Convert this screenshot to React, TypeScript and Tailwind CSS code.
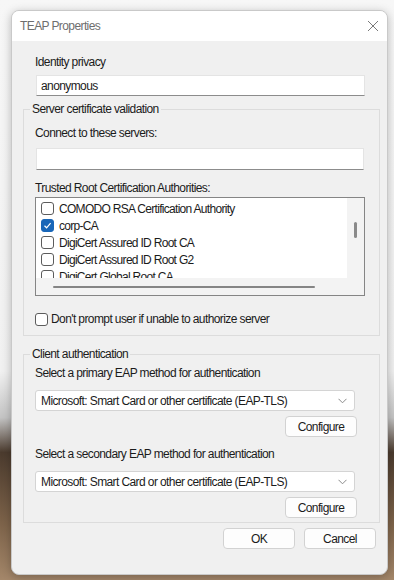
import React from "react";

const font = { fontFamily: '"Liberation Sans", Arial, sans-serif' };

const Check = ({ checked = false }: { checked?: boolean }) => (
  <span
    className={
      "flex h-[13px] w-[13px] shrink-0 items-center justify-center rounded-[3px] border " +
      (checked ? "border-[#1866b8] bg-[#1866b8]" : "border-[#5c5c5c] bg-white")
    }
  >
    {checked && (
      <svg width="9" height="9" viewBox="0 0 9 9" fill="none">
        <polyline points="1.5,4.8 3.6,6.8 7.6,2.2" stroke="white" strokeWidth="1.2" />
      </svg>
    )}
  </span>
);

const Btn = ({ label }: { label: string }) => (
  <button className="h-[21px] w-[72px] rounded-[4px] border border-[#d2d2d2] bg-[#fdfdfd] text-[12px] leading-[16px] text-[#1b1b1b]">
    {label}
  </button>
);

const Select = () => (
  <div className="mt-[9px] flex h-[21px] w-[320px] items-center justify-between rounded-[3px] border border-[#d4d4d4] bg-white pl-[5px] pr-[7px]">
    <span>Microsoft: Smart Card or other certificate (EAP-TLS)</span>
    <svg width="9" height="6" viewBox="0 0 9 6" fill="none">
      <polyline points="0.5,0.8 4.5,4.8 8.5,0.8" stroke="#8a8a8a" strokeWidth="1" />
    </svg>
  </div>
);

const certs = [
  { name: "COMODO RSA Certification Authority", checked: false },
  { name: "corp-CA", checked: true },
  { name: "DigiCert Assured ID Root CA", checked: false },
  { name: "DigiCert Assured ID Root G2", checked: false },
  { name: "DigiCert Global Root CA", checked: false },
];

export default function App() {
  return (
    <div
      className="h-[580px] w-[394px] overflow-hidden bg-[linear-gradient(to_bottom,#f7f7f7_0%,#f1f1f1_64%,#c4c4c4_72%,#4b3b2e_78%,#7c6249_90%,#a4876a_100%)] pl-[11px] pt-[10px] text-[12px] leading-[16px] tracking-[-0.6px] text-[#1b1b1b]"
      style={font}
    >
      <div className="flex h-[565px] w-[377px] flex-col overflow-hidden rounded-[8px] border border-[#c9c9c9] bg-[#f0f0f0] shadow-[0_2px_10px_rgba(0,0,0,0.25)]">
        {/* title bar */}
        <div className="flex h-[30px] shrink-0 items-center justify-between bg-white pl-[8px] pr-[8px]">
          <span className="text-[12px] text-[#6e6e6e]">TEAP Properties</span>
          <svg width="12" height="12" viewBox="0 0 12 12" fill="none">
            <line x1="1" y1="1" x2="11" y2="11" stroke="#7a7a7a" strokeWidth="1" />
            <line x1="11" y1="1" x2="1" y2="11" stroke="#7a7a7a" strokeWidth="1" />
          </svg>
        </div>

        <div className="flex flex-col pl-[11px] pt-[13px]">
          <div className="pl-[12px]">Identity privacy</div>
          <div className="ml-[13px] mt-[5px] flex h-[21px] w-[329px] items-center border border-[#e4e4e4] border-b-[#8c8c8c] bg-white pl-[4px]">
            anonymous
          </div>

          {/* server certificate validation */}
          <fieldset className="mt-[5px] w-[357px] border border-[#dcdcdc] px-0 pb-[8px]">
            <legend className="ml-[6px] px-[2px]">Server certificate validation</legend>
            <div className="flex flex-col pl-[11px] pt-[8px]">
              <div>Connect to these servers:</div>
              <div className="ml-[1px] mt-[7px] h-[22px] w-[328px] border border-[#e4e4e4] border-b-[#8c8c8c] bg-white" />
              <div className="mt-[10px]">Trusted Root Certification Authorities:</div>
              <div className="mt-[1px] flex h-[99px] w-[330px] flex-col border border-[#858585] bg-[#f3f3f3]">
                <div className="flex h-[80px]">
                  <div className="flex w-[311px] flex-col overflow-hidden bg-white pl-[5px] pt-[2px] tracking-[-0.7px]">
                    {certs.map((c) => (
                      <div key={c.name} className="flex h-[17px] shrink-0 items-center gap-[5px] whitespace-nowrap">
                        <Check checked={c.checked} />
                        <span>{c.name}</span>
                      </div>
                    ))}
                  </div>
                  <div className="flex flex-1 justify-center pt-[24px]">
                    <div className="h-[16px] w-[3px] rounded-full bg-[#8a8a8a]" />
                  </div>
                </div>
                <div className="flex flex-1 items-center pl-[17px]">
                  <div className="h-[2px] w-[262px] rounded-full bg-[#858585]" />
                </div>
              </div>
              <div className="mt-[15px] flex h-[16px] items-center gap-[3px]">
                <Check />
                <span>Don&apos;t prompt user if unable to authorize server</span>
              </div>
            </div>
          </fieldset>

          {/* client authentication */}
          <fieldset className="mt-[10px] w-[357px] border border-[#dcdcdc] px-0 pb-[4px]">
            <legend className="ml-[6px] px-[2px]">Client authentication</legend>
            <div className="flex flex-col pl-[11px] pt-[3px]">
              <div>Select a primary EAP method for authentication</div>
              <Select />
              <div className="mt-[5px] flex w-[322px] justify-end">
                <Btn label="Configure" />
              </div>
              <div className="mt-[9px]">Select a secondary EAP method for authentication</div>
              <Select />
              <div className="mt-[5px] flex w-[322px] justify-end">
                <Btn label="Configure" />
              </div>
            </div>
          </fieldset>

          <div className="mt-[5px] flex justify-end gap-[9px] pr-[11px]">
            <Btn label="OK" />
            <Btn label="Cancel" />
          </div>
        </div>
      </div>
    </div>
  );
}
